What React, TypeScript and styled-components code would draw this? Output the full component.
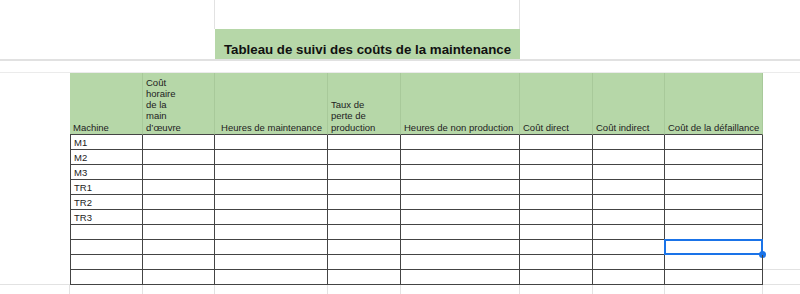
import * as React from 'react';
import styled, { createGlobalStyle } from 'styled-components';

const COLS = '70px 73px 72px 113px 73px 119px 73px 72px 98px 1fr';
const GRID = '#e2e2e2';
const INK = '#444444';
const GREEN = '#b6d7a8';

interface HeaderIF {
  label: React.ReactNode;
  center?: boolean;
}

const HEADERS: HeaderIF[] = [
  { label: 'Machine' },
  { label: <>Coût<br />horaire<br />de la<br />main<br />d’œuvre</> },
  { label: 'Heures de maintenance', center: true },
  { label: <>Taux de<br />perte de<br />production</> },
  { label: 'Heures de non production' },
  { label: 'Coût direct' },
  { label: 'Coût indirect' },
  { label: 'Coût de la défaillance' },
];

const MACHINES = ['M1', 'M2', 'M3', 'TR1', 'TR2', 'TR3', '', '', '', ''];
const SELECTED_ROW = 7;

const GlobalStyle = createGlobalStyle`
  html, body {
    margin: 0;
    padding: 0;
    background: #ffffff;
  }
  body {
    font-family: 'Liberation Sans', Arial, sans-serif;
    color: #222222;
  }
`;

const App: React.FC = () => {
  return (
    <>
      <GlobalStyle />
      <Sheet>
        <GridRow $h={29}>
          <MergeTop />
        </GridRow>
        <GridRow $h={30}>
          <TitleCell>Tableau de suivi des coûts de la maintenance</TitleCell>
        </GridRow>
        <FrozenBar />
        <Spacer />

        <GridRow $h={62}>
          <Gutter />
          {HEADERS.map((h, i) => (
            <HeaderCell key={i} $center={h.center}>
              <span>{h.label}</span>
            </HeaderCell>
          ))}
        </GridRow>

        {MACHINES.map((m, r) => (
          <GridRow key={r} $h={15}>
            <Gutter $bottom={r === MACHINES.length - 1} />
            {HEADERS.map((_, c) => (
              <BodyCell key={c} $first={c === 0}>
                {c === 0 ? m : ''}
                {r === SELECTED_ROW && c === HEADERS.length - 1 && (
                  <Selection>
                    <Handle />
                  </Selection>
                )}
              </BodyCell>
            ))}
            <Gutter $bottom={r >= MACHINES.length - 2} />
          </GridRow>
        ))}

        <GridRow $h={12}>
          {Array.from({ length: 9 }).map((_, i) => (
            <Gutter key={i} $right />
          ))}
        </GridRow>
      </Sheet>
    </>
  );
};

interface RowIF {
  $h: number;
}

interface GutterIF {
  $bottom?: boolean;
  $right?: boolean;
}

interface HeaderCellIF {
  $center?: boolean;
}

interface BodyCellIF {
  $first?: boolean;
}

const Sheet = styled.div`
  width: 800px;
  height: 294px;
  overflow: hidden;
  background: #ffffff;
`;

const GridRow = styled.div<RowIF>`
  display: grid;
  grid-template-columns: ${COLS};
  height: ${(p) => p.$h}px;
`;

const MergeTop = styled.div`
  grid-column: 4 / 7;
  border-left: 1px solid ${GRID};
  border-right: 1px solid ${GRID};
  margin-left: -1px;
`;

const TitleCell = styled.div`
  grid-column: 4 / 7;
  display: flex;
  align-items: flex-end;
  justify-content: center;
  padding-bottom: 1px;
  background: ${GREEN};
  font-size: 13.3px;
  line-height: 16px;
  font-weight: bold;
  color: #111111;
  white-space: nowrap;
`;

const FrozenBar = styled.div`
  height: 2px;
  background: #e1e1e1;
`;

const Spacer = styled.div`
  height: 12px;
  border-bottom: 1px solid #ebebeb;
  box-sizing: border-box;
`;

const Gutter = styled.div<GutterIF>`
  box-sizing: border-box;
  border-bottom: ${(p) => (p.$bottom ? `1px solid ${GRID}` : 'none')};
  border-right: ${(p) => (p.$right ? `1px solid ${GRID}` : 'none')};
`;

const HeaderCell = styled.div<HeaderCellIF>`
  box-sizing: border-box;
  display: flex;
  align-items: flex-end;
  justify-content: ${(p) => (p.$center ? 'center' : 'flex-start')};
  padding: 0 2px 1px 3px;
  background: ${GREEN};
  border-right: 1px solid #a8c99a;
  border-bottom: 1px solid ${INK};
  font-size: 9.5px;
  line-height: 11.3px;
  color: #222222;
  white-space: nowrap;
`;

const BodyCell = styled.div<BodyCellIF>`
  position: relative;
  box-sizing: border-box;
  display: flex;
  align-items: flex-end;
  padding: 0 2px 1px 3px;
  border-right: 1px solid ${INK};
  border-bottom: 1px solid ${INK};
  border-left: ${(p) => (p.$first ? `1px solid ${INK}` : 'none')};
  font-size: 9.5px;
  line-height: 11.3px;
  color: #222222;
`;

const Selection = styled.div`
  position: absolute;
  top: -1px;
  left: -1px;
  right: -1px;
  bottom: -1px;
  border: 2px solid #1a73e8;
  box-sizing: border-box;
  pointer-events: none;
`;

const Handle = styled.div`
  position: absolute;
  right: -5px;
  bottom: -5px;
  width: 7px;
  height: 7px;
  border-radius: 50%;
  background: #1a73e8;
`;

export default App;
